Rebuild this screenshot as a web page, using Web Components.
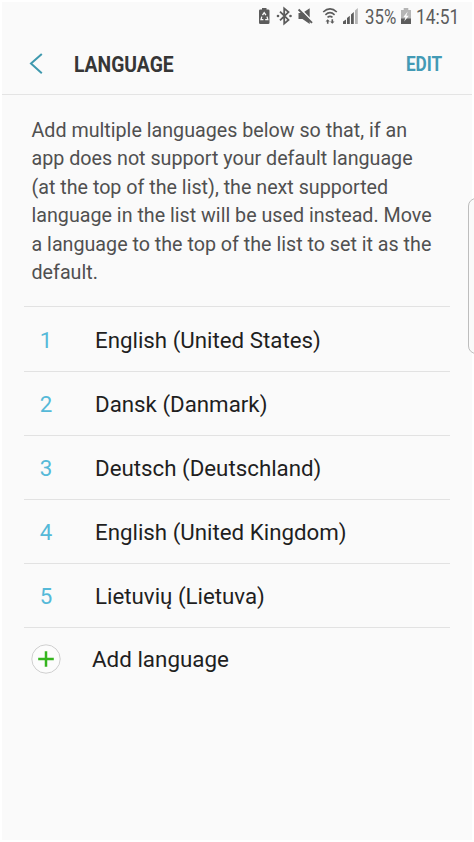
<!DOCTYPE html>
<html lang="en">
<head>
<meta charset="utf-8">
<meta name="viewport" content="width=device-width, initial-scale=1">
<title>Language</title>
<style>
  html, body {
    margin: 0;
    height: 100%;
    overflow: hidden;
    background: #fff;
    font-family: Roboto, "Liberation Sans", sans-serif;
  }
</style>
</head>
<body>
<language-screen></language-screen>

<script>
class StatusBar extends HTMLElement {
  constructor() {
    super();
    this.attachShadow({ mode: "open" });
    this.shadowRoot.innerHTML = /*html*/ `
    <style>
      :host {
        display: flex;
        box-sizing: border-box;
        height: 32px;
        padding-left: 255px;
        color: #5c5c5c;
      }

      svg {
        display: block;
        flex: none;
      }

      span {
        display: block;
        flex: none;
        font-size: 20px;
        line-height: 30px;
        white-space: nowrap;
        transform-origin: 0 50%;
      }

      .percent {
        width: 33px;
        margin-left: 6px;
        transform: scaleX(.84);
      }

      .time {
        width: 44px;
        margin-left: 4px;
        transform: scaleX(.87);
      }
    </style>

    <svg width="102" height="30" viewBox="257 2 102 30">
      <path fill="#5c5c5c" d="M260.300 9.500h1.700V8h4.500v1.500h1.700q1.300 0 1.300 1.300v11.900q0 1.300-1.300 1.300h-7.900q-1.300 0-1.300-1.300V10.800q0-1.300 1.300-1.300z"/>
      <path fill="none" stroke="#fafafa" stroke-width="1.300" d="M262.500 15.200l1.700-2.500 1.700 2.500M267 16.700l.8 3h-2.600M263.400 19.700H261l.8-3"/>
      <path fill="none" stroke="#5c5c5c" stroke-width="1.800" d="M280 11.600l8.500 8.300-4.300 3.700V8.400l4.300 3.700-8.500 8.300"/>
      <circle fill="#5c5c5c" cx="278" cy="16" r="1.300"/>
      <circle fill="#5c5c5c" cx="290.500" cy="16" r="1.300"/>
      <path fill="#5c5c5c" d="M298.500 13h4l7.200-4.700v15.700l-7.200-4.900h-4z"/>
      <path stroke="#fafafa" stroke-width="1.600" d="M299.800 8.300l13 13.600"/>
      <path stroke="#5c5c5c" stroke-width="1.900" d="M298.600 9.500l13.400 13.400"/>
      <g fill="none" stroke="#5c5c5c" stroke-width="1.600">
        <path d="M323.200 12q6.800-6.400 13.600 0M325.400 14.800q4.600-4.200 9.200 0M327.500 17.400q2.500-2 5 0"/>
      </g>
      <path fill="#5c5c5c" d="M327.700 19.300l2.200 2.300h-1.400v2.200h-1.600v-2.200h-1.400zM332.300 23.800l-2.200-2.300h1.400v-2.200h1.600v2.200h1.400z"/>
      <path fill="#5c5c5c" d="M343 21.500l3-2V24h-3zM347 18l2.800-2.300V24H347zM351 14.500l2.800-2.500v12H351z"/>
      <path fill="#b5b5b5" d="M355 10.500l2.800-2.500v16H355z"/>
    </svg>
    <span class="percent">35%</span>
    <svg width="14" height="30" viewBox="397 2 14 30">
      <path fill="#b5b5b5" d="M400 10h2.700V8h4.600v2h2.700v14h-10z"/>
      <path fill="#5c5c5c" d="M400 18.500h10V24h-10z"/>
      <path fill="#fafafa" d="M406.700 11.500l-4.500 5.800h2.300l-1.300 4.200 4.600-5.800h-2.400z"/>
    </svg>
    <span class="time">14:51</span>
    `;
  }
}

class TitleBar extends HTMLElement {
  constructor() {
    super();
    this.attachShadow({ mode: "open" });
    this.shadowRoot.innerHTML = /*html*/ `
    <style>
      :host {
        display: flex;
        align-items: center;
        box-sizing: border-box;
        height: 61px;
        padding: 0 30px 0 27px;
        border-bottom: 1px solid #e4e4e4;
      }

      h1,
      ::slotted([slot="action"]) {
        flex: none;
        margin: 0;
        font-weight: 700;
        white-space: nowrap;
      }

      h1 {
        margin-left: 30px;
        padding-top: 1px;
        font-size: 22px;
        line-height: 30px;
        color: #363636;
        transform: scaleX(.877);
        transform-origin: 0 50%;
      }

      ::slotted([slot="action"]) {
        margin-left: auto;
        font-size: 20px;
        line-height: 30px;
        color: #439ab5;
        transform: scaleX(.86);
        transform-origin: 100% 50%;
      }
    </style>

    <svg width="15" height="22" viewBox="0 0 15 22">
      <path fill="none" stroke="#3f99ae" stroke-width="2" d="M12.800 1L2 10.500l10.800 9.700"/>
    </svg>
    <h1><slot></slot></h1>
    <slot name="action"></slot>
    `;
  }
}

class LanguageRow extends HTMLElement {
  constructor() {
    super();
    this.attachShadow({ mode: "open" });
    this.shadowRoot.innerHTML = /*html*/ `
    <style>
      :host {
        display: flex;
        align-items: center;
        box-sizing: border-box;
        height: 64px;
        border-bottom: 1px solid #e2e2e2;
        font-size: 22.3px;
        line-height: 30px;
        color: #1f1f1f;
      }

      .index {
        width: 44px;
        margin-right: 27px;
        text-align: center;
        color: #55b9d8;
      }
    </style>

    <div class="index"></div>
    <div class="label"><slot></slot></div>
    `;
  }

  static get observedAttributes() {
    return ["index"];
  }

  attributeChangedCallback(name, oldValue, newValue) {
    this.shadowRoot.querySelector(".index").textContent = newValue;
  }
}

class AddRow extends HTMLElement {
  constructor() {
    super();
    this.attachShadow({ mode: "open" });
    this.shadowRoot.innerHTML = /*html*/ `
    <style>
      :host {
        display: flex;
        align-items: center;
        box-sizing: border-box;
        height: 61px;
        padding-left: 7px;
        font-size: 22.4px;
        line-height: 30px;
        color: #1f1f1f;
      }

      svg {
        margin-right: 31px;
      }

      .label {
        padding-top: 1px;
      }
    </style>

    <svg width="30" height="30" viewBox="0 0 30 30">
      <circle fill="#fcfcfc" stroke="#cfcfcf" cx="15" cy="15" r="14.200"/>
      <path stroke="#35b51e" stroke-width="2.500" d="M7.200 15h15.600M15 7.200v15.600"/>
    </svg>
    <div class="label"><slot></slot></div>
    `;
  }
}

class LanguageScreen extends HTMLElement {
  constructor() {
    super();
    this.attachShadow({ mode: "open" });
    this.shadowRoot.innerHTML = /*html*/ `
    <style>
      :host {
        display: block;
        position: relative;
        box-sizing: border-box;
        width: 474px;
        height: 842px;
        border: 2px solid #fff;
        background: #fafafa;
      }

      p {
        margin: 0;
        padding: 21.5px 0 0 29.5px;
        height: 189.5px;
        font-size: 19.700px;
        line-height: 28.5px;
        color: #505050;
        white-space: nowrap;
      }

      .list {
        margin: 0 22px;
        padding-top: 1px;
        border-top: 1px solid #e2e2e2;
      }

      /* handle of the edge panel, half of it past the screen's side */
      .edge {
        position: absolute;
        top: 196px;
        right: -12px;
        box-sizing: border-box;
        width: 16px;
        height: 156px;
        border: 1px solid #bdbdbd;
        border-radius: 8px;
        background: #fafafa;
      }
    </style>

    <status-bar></status-bar>
    <title-bar>LANGUAGE<span slot="action">EDIT</span></title-bar>
    <p>Add multiple languages below so that, if an<br>
      app does not support your default language<br>
      (at the top of the list), the next supported<br>
      language in the list will be used instead. Move<br>
      a language to the top of the list to set it as the<br>
      default.</p>
    <div class="list">
      <language-row index="1">English (United States)</language-row>
      <language-row index="2">Dansk (Danmark)</language-row>
      <language-row index="3">Deutsch (Deutschland)</language-row>
      <language-row index="4">English (United Kingdom)</language-row>
      <language-row index="5">Lietuvių (Lietuva)</language-row>
      <add-row>Add language</add-row>
    </div>
    <div class="edge"></div>
    `;
  }
}

customElements.define('status-bar', StatusBar);
customElements.define('title-bar', TitleBar);
customElements.define('language-row', LanguageRow);
customElements.define('add-row', AddRow);
customElements.define('language-screen', LanguageScreen);
</script>
</body>
</html>
